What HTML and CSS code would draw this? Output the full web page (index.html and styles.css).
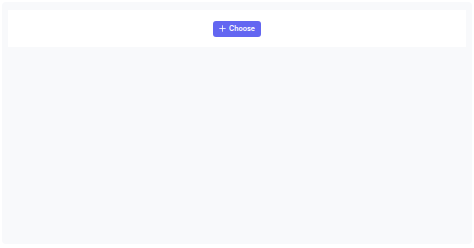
FILE: index.html
```html
<!DOCTYPE html>
<html lang="en">
<head>
    <meta charset="UTF-8">
    <meta name="viewport" content="width=device-width, initial-scale=1.0">
    <title>Choose</title>
    <link rel="stylesheet" href="styles.css">
</head>
<body>
    <div class="app">
        <!-- Toolbar -->
        <div class="toolbar">
            <button class="choose-button">
                <svg class="plus-icon" viewBox="0 0 10 10" width="7" height="7">
                    <path d="M5 1v8M1 5h8" stroke="#fff" stroke-width="1.1" stroke-linecap="round"/>
                </svg>
                Choose
            </button>
        </div>
    </div>
</body>
</html>
```
FILE: styles.css
```css
* {margin: 0; padding: 0; box-sizing: border-box;}
body {font-family: Inter, "Noto Sans", sans-serif; background-color: #fff; padding: 2px;}
.app {height: 242px; background-color: #f8f9fb; border-radius: 4px; padding: 8px 6px;}
.toolbar {height: 37px; background-color: #fff; display: flex; align-items: center; justify-content: center;}
.choose-button {display: flex; align-items: center; gap: 3px; height: 16px; padding: 0 6px; background-color: #6366f1; color: #fff; border: none; border-radius: 3px; font-family: Inter, sans-serif; font-size: 7px; font-weight: 600; cursor: pointer;}
.plus-icon {display: block;}
```
